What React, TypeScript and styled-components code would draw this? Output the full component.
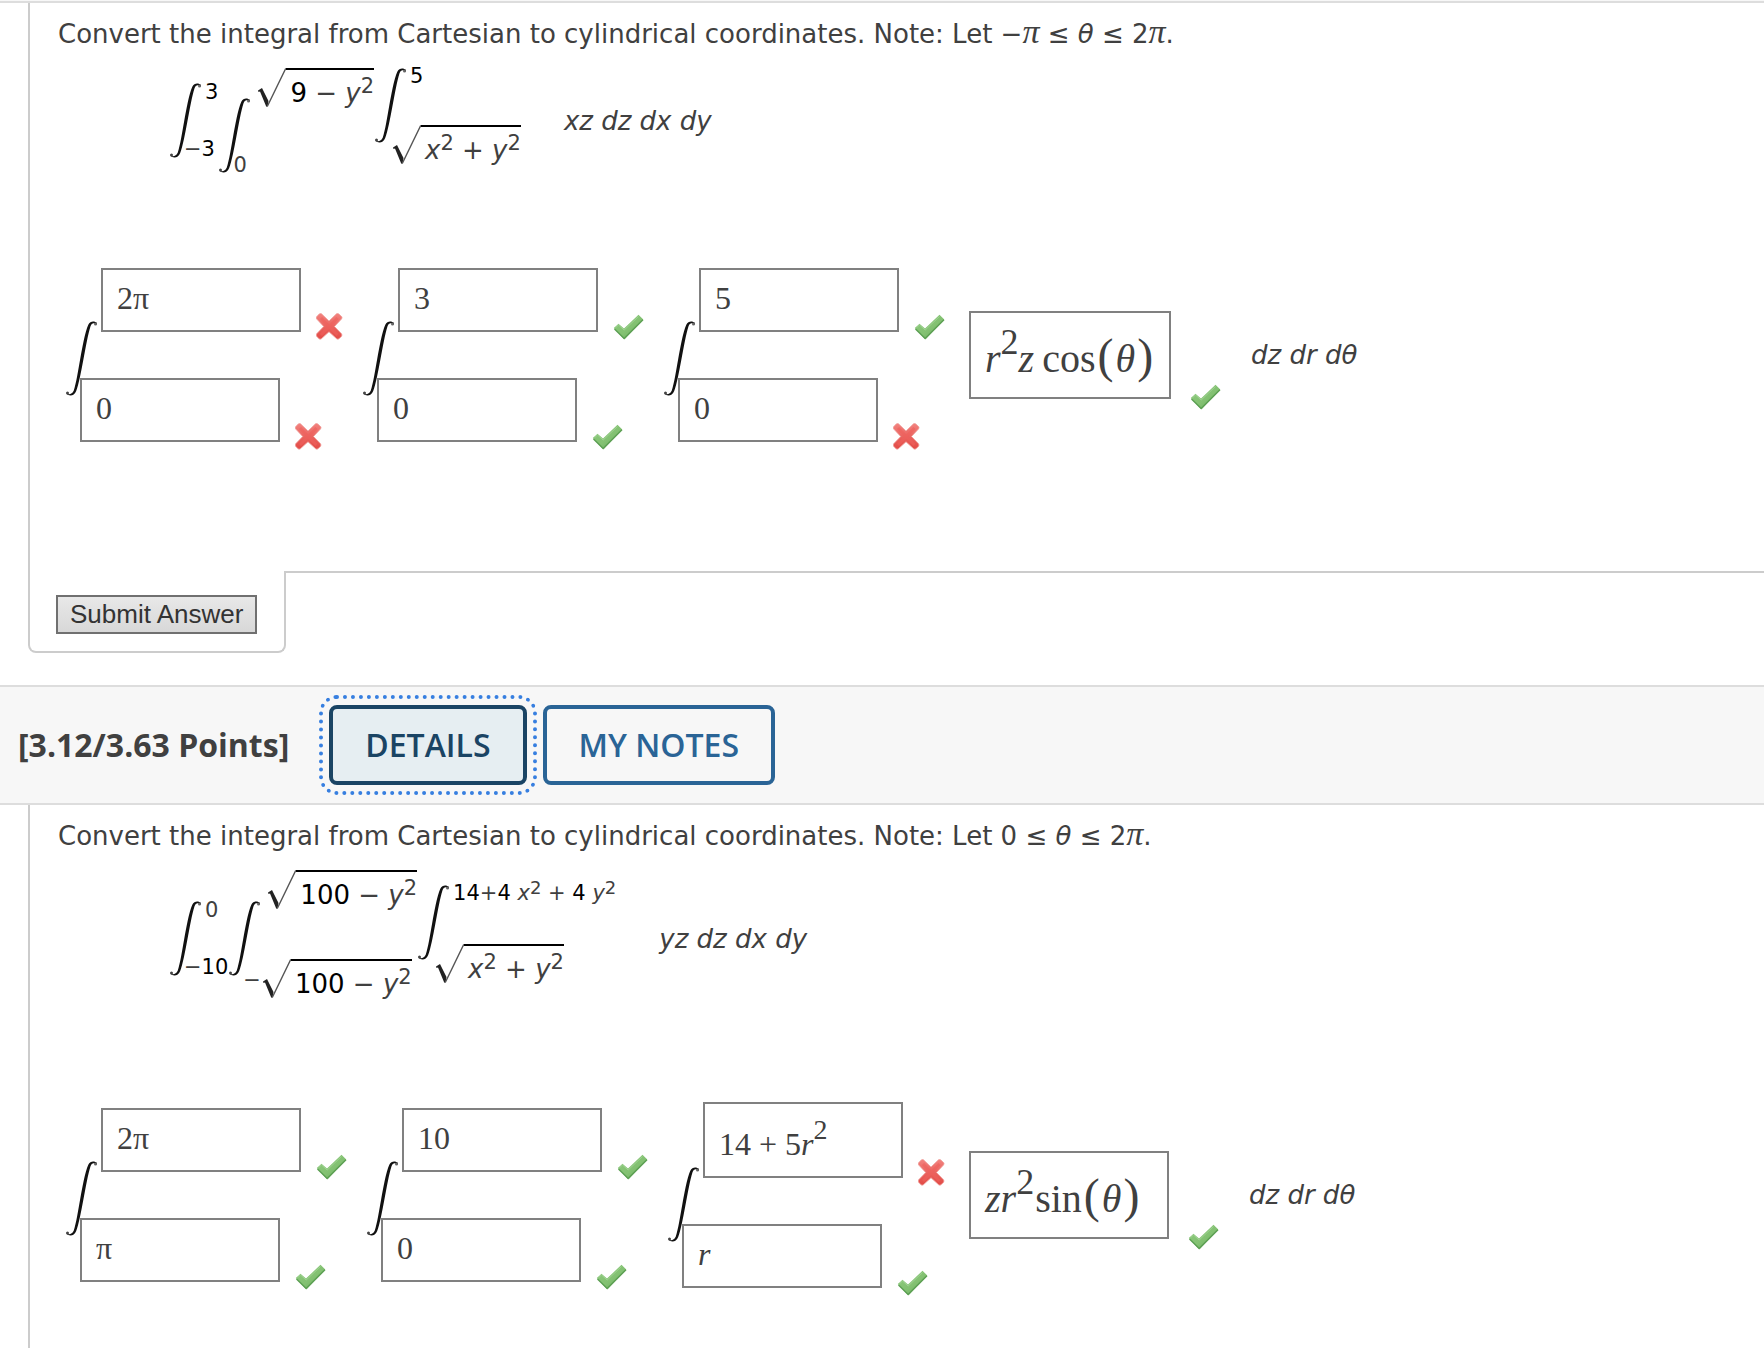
import React, { useId } from "react";
import styled, { createGlobalStyle, css } from "styled-components";

const GlobalStyle = createGlobalStyle`
  *, *::before, *::after { box-sizing: border-box; }
  body {
    margin: 0;
    background: #fff;
    color: #404040;
    font-family: "DejaVu Sans", Verdana, sans-serif;
    font-size: 26px;
    line-height: 30px;
  }
`;

const mathFont = `"Liberation Serif", "Times New Roman", serif`;

/* ---------- page frame ---------- */

const Page = styled.main`
  min-height: 100vh;
  display: flex;
  flex-direction: column;
`;

const TopEdge = styled.div`
  height: 3px;
  background: #f7f7f7;
  border-bottom: 2px solid #ddd;
`;

const Question = styled.section<{ $fill?: boolean }>`
  flex: ${(p) => (p.$fill ? "1 0 auto" : "none")};
  margin-left: 28px;
  padding: 16px 28px ${(p) => (p.$fill ? 56 : 129)}px;
  border-left: 2px solid #ccc;
`;

const Prompt = styled.p`
  margin: 0 0 19px;
`;

const Greek = styled.i`
  font-family: ${mathFont};
  font-size: 34px;
  line-height: 0;
`;

const SubmitRow = styled.div`
  display: flex;
  align-items: flex-start;
  margin: 0 0 32px 28px;
`;

const SubmitTab = styled.div`
  padding: 24px 27px 17px 26px;
  border: 2px solid #ccc;
  border-top: 0;
  border-radius: 0 0 8px 8px;
`;

const SubmitRule = styled.div`
  flex: 1;
  margin-left: -2px;
  border-top: 2px solid #ccc;
`;

const SubmitButton = styled.button`
  display: block;
  height: 39px;
  padding: 0 12px 2px;
  border: 2px solid #707070;
  border-radius: 0;
  background: linear-gradient(#e8e8e8, #d8d8d8);
  color: #333;
  font: 26px/30px "Liberation Sans", Arial, sans-serif;
  white-space: nowrap;
`;

const HeaderBar = styled.header`
  display: flex;
  align-items: center;
  gap: 16px;
  height: 120px;
  padding: 0 18px;
  border: solid #ddd;
  border-width: 2px 0;
  background: #f7f7f7;
  font-family: "Open Sans", sans-serif;
`;

const Points = styled.h2`
  margin: 0 24px 0 0;
  font-size: 32px;
  line-height: 44px;
  font-weight: 700;
`;

const HeaderButton = styled.button<{ $current?: boolean }>`
  height: 80px;
  padding: 0 32px;
  border: 4px solid #2a6496;
  border-radius: 8px;
  background: transparent;
  color: #2a6496;
  font: 600 32px/44px "Open Sans", sans-serif;
  ${(p) =>
    p.$current &&
    css`
      border-color: #1a4464;
      background: #e6eef2;
      color: #1a4464;
      outline: 4px dotted #377fe0;
      outline-offset: 6px;
    `}
`;

/* ---------- integrals ---------- */

const Expression = styled.div`
  display: flex;
  align-items: center;
  gap: 1px;
  margin: 0 0 95px 112px;
`;

const Differential = styled.i<{ $space: number }>`
  margin-left: ${(p) => p.$space}px;
  white-space: nowrap;
`;

const IntegralBox = styled.div<{ $align: string }>`
  display: flex;
  align-items: ${(p) => p.$align};
`;

const SignSvg = styled.svg<{ $lift?: number }>`
  flex: none;
  width: 31px;
  height: 75px;
  margin-bottom: ${(p) => p.$lift ?? 0}px;
`;

const Limits = styled.div<{ $gap: number }>`
  display: flex;
  flex-direction: column;
  align-items: flex-start;
  gap: ${(p) => p.$gap}px;
  margin-left: -17px;
`;

const Upper = styled.div`
  padding-left: 21px;
`;

const Small = styled.div`
  font-size: 21px;
  line-height: 16px;
  white-space: nowrap;
`;

const Num = styled.span`
  color: #000;
`;

const Sup = styled.span<{ $small?: boolean }>`
  position: relative;
  top: ${(p) => (p.$small ? -6 : -9)}px;
  font-size: ${(p) => (p.$small ? 18 : 21)}px;
  line-height: 1;
`;

const RootBox = styled.div`
  display: flex;
  align-items: flex-start;
  height: 48px;
  padding-left: 4px;
`;

const RootSvg = styled.svg`
  flex: none;
  width: 28px;
  height: 39px;
`;

const Radicand = styled.div`
  padding-left: 4px;
  border-top: 2px solid #000;
  line-height: 46px;
  height: 48px;
  white-space: nowrap;
`;

const SignedRoot = styled.div`
  display: flex;
  align-items: flex-start;
  font-size: 21px;
  line-height: 42px;

  & ${RootBox} {
    padding-left: 2px;
    font-size: 26px;
  }
`;

/* ---------- answers ---------- */

const Answers = styled.div`
  display: flex;
  align-items: center;
  gap: 20px;
  margin-left: 8px;
`;

const Answer = styled.div`
  display: flex;
  align-items: flex-end;
  gap: 15px;
`;

const Integrand = styled(Answer)`
  gap: 19px;
  margin-left: 4px;
`;

const fieldBox = css`
  border: 2px solid #808080;
  border-radius: 0;
  background: transparent;
  color: #404040;
  font-family: ${mathFont};
`;

const Field = styled.input`
  ${fieldBox}
  width: 200px;
  height: 64px;
  padding: 0 14px 4px;
  font-size: 32px;
  font-style: ${(p) => (p.defaultValue === "r" ? "italic" : "normal")};
`;

const MathField = styled.div<{ $large?: boolean }>`
  ${fieldBox}
  min-width: 200px;
  height: ${(p) => (p.$large ? 88 : 76)}px;
  padding: 8px 14px 0;
  font-size: ${(p) => (p.$large ? 40 : 32)}px;
  line-height: ${(p) => (p.$large ? 76 : 64)}px;
  white-space: nowrap;
`;

const MathSup = styled.span<{ $large?: boolean }>`
  position: relative;
  top: ${(p) => (p.$large ? -18 : -16)}px;
  font-size: ${(p) => (p.$large ? 36 : 28)}px;
  line-height: 1;
`;

const Fn = styled.span<{ $space?: boolean }>`
  margin-left: ${(p) => (p.$space ? 8 : 1)}px;
`;

const Paren = styled.span`
  margin: 0 2px;
  font-size: 48px;
  line-height: 1;
`;

const MarkSvg = styled.svg<{ $wide?: boolean }>`
  flex: none;
  width: ${(p) => (p.$wide ? 31 : 27)}px;
  height: 27px;
  margin-bottom: -8px;

  ${Integrand} > & {
    margin-bottom: -11px;
  }
`;

/* ---------- drawings ---------- */

function Sign({ lift }: { lift?: number }) {
  return (
    <SignSvg $lift={lift} viewBox="0 0 31 75" aria-hidden="true">
      <path
        fill="#111"
        d="M30.500 4C28.500 1.800 26 1.500 24.600 5C22 13 19.600 27 17.300 39C15 51 12.800 63 10.200 70C8.200 75.300 3 75.500 .5 72.800C3.500 74 6.300 73 7.800 69.500C10.300 62 12 50 14.200 38C16.500 26 19 11 22.300 3.800C24.200 -.2 28.500 -.2 31 2Z"
      />
      <circle cx="29.500" cy="3" r="1.500" fill="#666" />
      <circle cx="1.500" cy="71.900" r="1.500" fill="#444" />
    </SignSvg>
  );
}

function Root({ children }: { children: React.ReactNode }) {
  return (
    <RootBox>
      <RootSvg viewBox="0 0 28 39" aria-hidden="true">
        <path d="M0 22.500L4 20L10.500 33L9.500 39L8.200 38.500L2 23.500L.5 24Z" fill="#222" />
        <path d="M9.500 38L27.500 1H28" fill="none" stroke="#555" strokeWidth="1.400" />
      </RootSvg>
      <Radicand>{children}</Radicand>
    </RootBox>
  );
}

function Mark({ ok }: { ok: boolean }) {
  const id = useId();
  return ok ? (
    <MarkSvg $wide viewBox="0 0 31 27" role="img" aria-label="Correct">
      <defs>
        <linearGradient id={id} x1="0" y1="0" x2="1" y2="1">
          <stop offset="0" stopColor="#8ccb7c" />
          <stop offset=".55" stopColor="#83c172" />
          <stop offset="1" stopColor="#5fa555" />
        </linearGradient>
      </defs>
      <path d="M.8 15L5.500 10.800L11 15.500L25.500 1.800L30.300 6.500L12 25.800H10.500Z" fill={`url(#${id})`} />
      <path d="M1.500 16L11.200 25.400L30 6.700" fill="none" stroke="#5c9f53" strokeWidth="1.400" />
      <path d="M2.500 14.800L5.500 12L11.200 17L25.500 3.400" fill="none" stroke="#a0d293" strokeWidth="1" />
    </MarkSvg>
  ) : (
    <MarkSvg viewBox="0 0 27 27" role="img" aria-label="Incorrect">
      <defs>
        <linearGradient id={id} x1="0" y1="0" x2="0" y2="1">
          <stop offset="0" stopColor="#f2837f" />
          <stop offset=".5" stopColor="#ea6460" />
          <stop offset="1" stopColor="#e24a45" />
        </linearGradient>
      </defs>
      <path
        d="M5.500 .8L13 8L20.500 .8Q21.800 0 22.900 1L25.800 3.800Q26.400 5 25.500 6L18.500 13.500L25.500 20.700Q26.400 22 25.600 23.200L23 25.800Q22 26.600 20.700 25.800L13 18.800L5.300 25.800Q4 26.600 3 25.800L.6 23.200Q-.2 22 .7 20.700L7.700 13.500L.7 6Q-.2 5 .6 3.800L3.200 1Q4.200 0 5.500 .8Z"
        fill={`url(#${id})`}
        stroke="#f0a09c"
        strokeWidth=".8"
      />
      <path d="M5 5L21.500 22M21.500 5L5 22" stroke="#ef605c" strokeWidth="3" opacity=".6" />
    </MarkSvg>
  );
}

/* ---------- composed parts ---------- */

function Integral({ upper, lower, align = "center" }: { upper: React.ReactNode; lower: React.ReactNode; align?: string }) {
  return (
    <IntegralBox $align={align}>
      <Sign />
      <Limits $gap={41}>
        <Upper>{upper}</Upper>
        {lower}
      </Limits>
    </IntegralBox>
  );
}

type Entry = { value: React.ReactNode; ok: boolean };

function Limit({ entry, label }: { entry: Entry; label: string }) {
  return (
    <Answer>
      {typeof entry.value === "string" ? (
        <Field type="text" defaultValue={entry.value} aria-label={label} />
      ) : (
        <MathField role="textbox" tabIndex={0} aria-label={label}>
          {entry.value}
        </MathField>
      )}
      <Mark ok={entry.ok} />
    </Answer>
  );
}

function AnswerIntegral({ name, upper, lower }: { name: string; upper: Entry; lower: Entry }) {
  return (
    <IntegralBox $align="flex-end">
      <Sign lift={46} />
      <Limits $gap={46}>
        <Upper>
          <Limit entry={upper} label={`${name} upper limit`} />
        </Upper>
        <Limit entry={lower} label={`${name} lower limit`} />
      </Limits>
    </IntegralBox>
  );
}

function SumOfSquares() {
  return (
    <Root>
      <i>x</i>
      <Sup>2</Sup> + <i>y</i>
      <Sup>2</Sup>
    </Root>
  );
}

function Difference({ from }: { from: string }) {
  return (
    <Root>
      <Num>{from}</Num> − <i>y</i>
      <Sup>2</Sup>
    </Root>
  );
}

export default function App() {
  return (
    <Page>
      <GlobalStyle />
      <TopEdge />

      <Question>
        <Prompt>
          Convert the integral from Cartesian to cylindrical coordinates. Note: Let −<Greek>π</Greek> ≤ <i>θ</i> ≤ 2
          <Greek>π</Greek>.
        </Prompt>
        <Expression>
          <Integral upper={<Small><Num>3</Num></Small>} lower={<Small>−<Num>3</Num></Small>} />
          <Integral align="flex-end" upper={<Difference from="9" />} lower={<Small>0</Small>} />
          <Integral align="flex-start" upper={<Small><Num>5</Num></Small>} lower={<SumOfSquares />} />
          <Differential $space={42}>xz dz dx dy</Differential>
        </Expression>
        <Answers>
          <AnswerIntegral name="Outer" upper={{ value: "2π", ok: false }} lower={{ value: "0", ok: false }} />
          <AnswerIntegral name="Middle" upper={{ value: "3", ok: true }} lower={{ value: "0", ok: true }} />
          <AnswerIntegral name="Inner" upper={{ value: "5", ok: true }} lower={{ value: "0", ok: false }} />
          <Integrand>
            <MathField $large role="textbox" tabIndex={0} aria-label="Integrand">
              <i>r</i>
              <MathSup $large>2</MathSup>
              <i>z</i>
              <Fn $space>cos</Fn>
              <Paren>(</Paren>
              <i>θ</i>
              <Paren>)</Paren>
            </MathField>
            <Mark ok />
          </Integrand>
          <Differential $space={10}>dz dr dθ</Differential>
        </Answers>
      </Question>

      <SubmitRow>
        <SubmitTab>
          <SubmitButton type="button">Submit Answer</SubmitButton>
        </SubmitTab>
        <SubmitRule />
      </SubmitRow>

      <HeaderBar>
        <Points>[3.12/3.63 Points]</Points>
        <HeaderButton type="button" $current>DETAILS</HeaderButton>
        <HeaderButton type="button">MY NOTES</HeaderButton>
      </HeaderBar>

      <Question $fill>
        <Prompt>
          Convert the integral from Cartesian to cylindrical coordinates. Note: Let 0 ≤ <i>θ</i> ≤ 2<Greek>π</Greek>.
        </Prompt>
        <Expression>
          <Integral upper={<Small>0</Small>} lower={<Small>−<Num>10</Num></Small>} />
          <Integral
            upper={<Difference from="100" />}
            lower={
              <SignedRoot>
                −<Difference from="100" />
              </SignedRoot>
            }
          />
          <Integral
            align="flex-start"
            upper={
              <Small>
                <Num>14</Num>+<Num>4</Num> <i>x</i>
                <Sup $small>2</Sup> + <Num>4</Num> <i>y</i>
                <Sup $small>2</Sup>
              </Small>
            }
            lower={<SumOfSquares />}
          />
          <Differential $space={42}>yz dz dx dy</Differential>
        </Expression>
        <Answers>
          <AnswerIntegral name="Outer" upper={{ value: "2π", ok: true }} lower={{ value: "π", ok: true }} />
          <AnswerIntegral name="Middle" upper={{ value: "10", ok: true }} lower={{ value: "0", ok: true }} />
          <AnswerIntegral
            name="Inner"
            upper={{
              value: (
                <>
                  14 + 5<i>r</i>
                  <MathSup>2</MathSup>
                </>
              ),
              ok: false,
            }}
            lower={{ value: "r", ok: true }}
          />
          <Integrand>
            <MathField $large role="textbox" tabIndex={0} aria-label="Integrand">
              <i>zr</i>
              <MathSup $large>2</MathSup>
              <Fn>sin</Fn>
              <Paren>(</Paren>
              <i>θ</i>
              <Paren>)</Paren>
            </MathField>
            <Mark ok />
          </Integrand>
          <Differential $space={10}>dz dr dθ</Differential>
        </Answers>
      </Question>
    </Page>
  );
}
